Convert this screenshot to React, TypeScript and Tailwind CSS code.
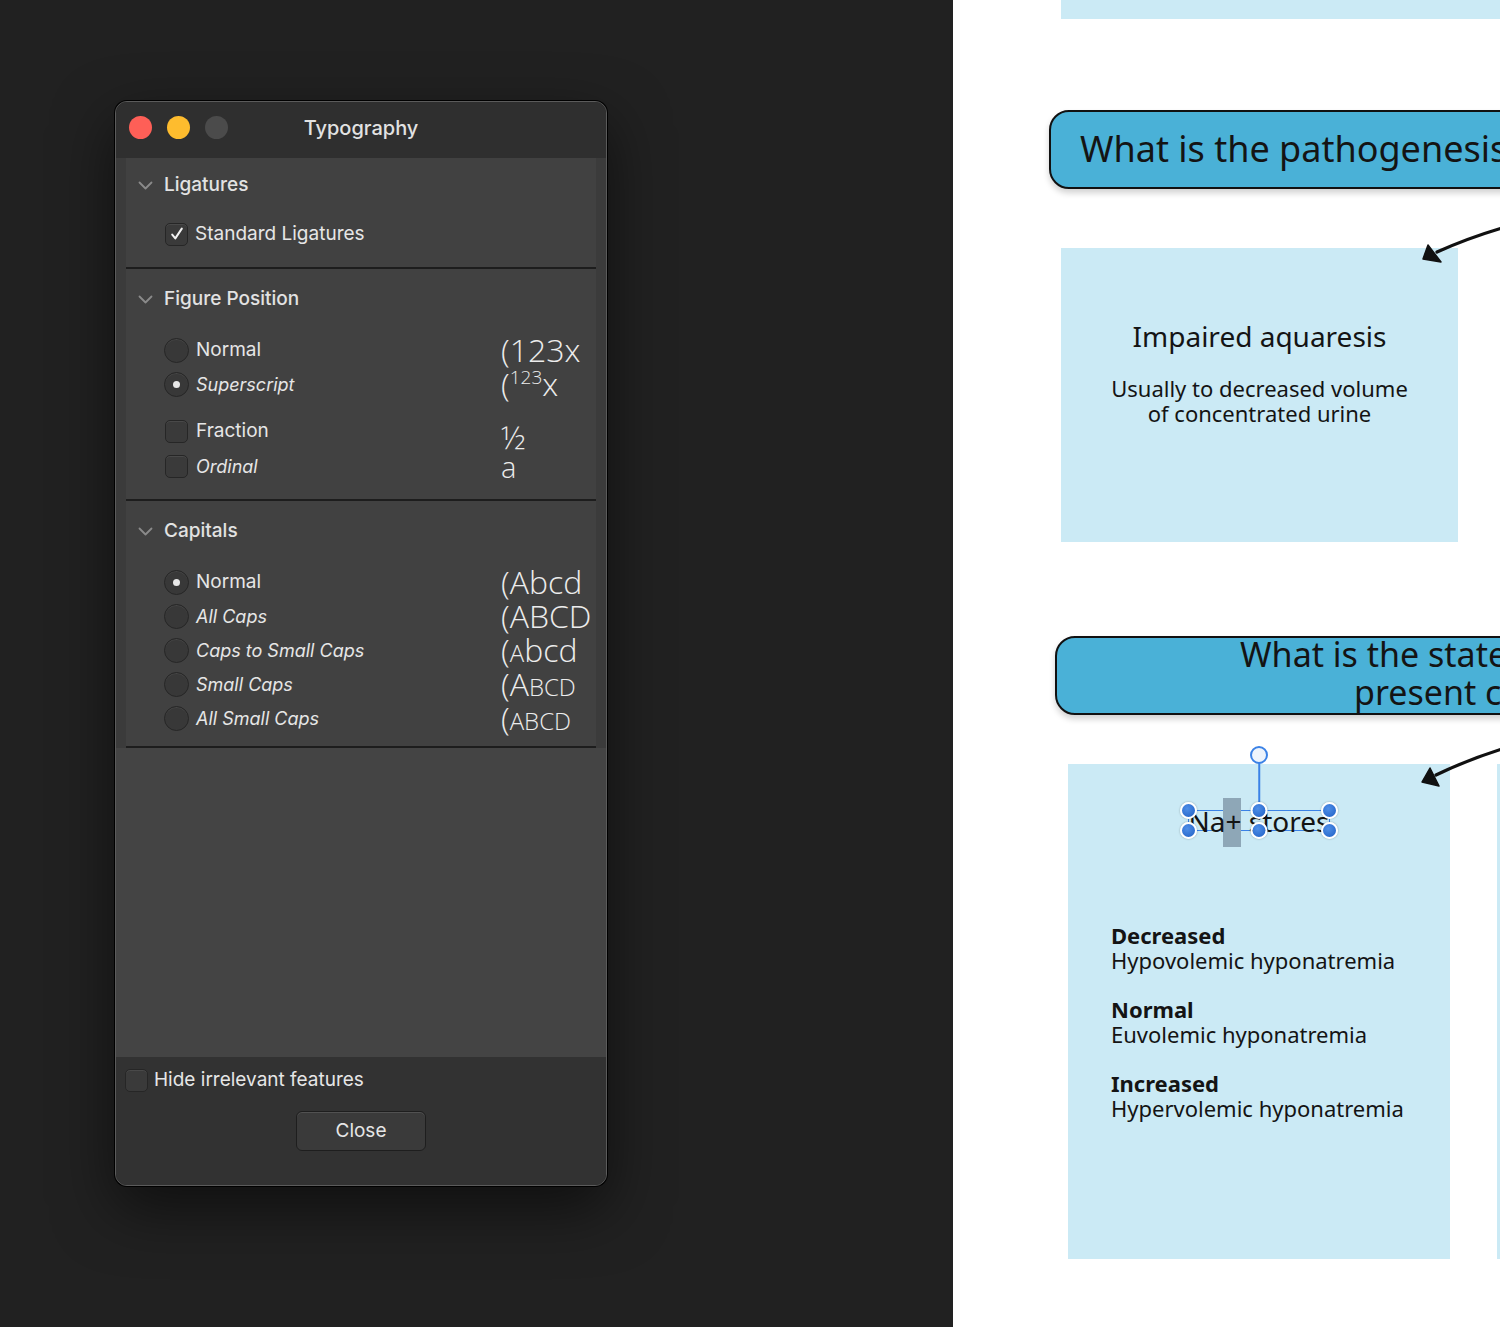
import { FC, ReactNode } from 'react';

const ui = "font-['Inter','Liberation_Sans',sans-serif]";
const canvasFont = "font-['Noto_Sans','Open_Sans',sans-serif]";
const previewFont = "font-['Open_Sans','Noto_Sans',sans-serif] font-light text-[#ececec]";

const Chevron: FC = () => (
  <svg width="15" height="9" viewBox="0 0 15 9" className="block">
    <path d="M1.5 1.5l6 6 6-6" stroke="#8a8a8a" strokeWidth="1.8" fill="none" strokeLinecap="round" strokeLinejoin="round" />
  </svg>
);

const Checkbox: FC<{ checked?: boolean }> = ({ checked }) => (
  <div className="w-[23px] h-[23px] rounded-[5px] bg-[#3a3a3a] border border-[#262626] shadow-[inset_0_1px_0_rgba(255,255,255,0.08)] flex items-center justify-center">
    {checked && (
      <svg width="16" height="16" viewBox="0 0 16 16">
        <path d="M3.2 8.6l3.1 3.8L12.8 2.6" stroke="#f2f2f2" strokeWidth="2" fill="none" strokeLinecap="round" strokeLinejoin="round" />
      </svg>
    )}
  </div>
);

const Radio: FC<{ checked?: boolean }> = ({ checked }) => (
  <div className="w-[25px] h-[25px] rounded-full bg-[#383838] border border-[#262626] shadow-[inset_0_1px_0_rgba(255,255,255,0.07)] flex items-center justify-center">
    {checked && <div className="w-[7px] h-[7px] rounded-full bg-[#e8e8e8]" />}
  </div>
);

const Row: FC<{ control: ReactNode; label: string; italic?: boolean; preview?: ReactNode; className?: string }> = ({
  control,
  label,
  italic,
  preview,
  className = '',
}) => (
  <div className={`flex items-center h-[34px] pl-[38px] ${className}`}>
    <div className="w-[25px] flex justify-center">{control}</div>
    <div className={`ml-[7px] w-[305px] text-[#e6e6e6] ${italic ? 'italic text-[18px]' : 'text-[19px]'}`}>{label}</div>
    <div className={`${previewFont} text-[32px] leading-none whitespace-nowrap`}>{preview}</div>
  </div>
);

const SectionHeader: FC<{ title: string; h: string }> = ({ title, h }) => (
  <div className={`flex items-center pl-[12px] ${h}`}>
    <Chevron />
    <span className="ml-[11px] text-[19px] font-medium text-[#e2e2e2]">{title}</span>
  </div>
);

const Divider: FC = () => <div className="h-[2px] mx-[10px] bg-[#1d1d1d]" />;

const TypographyDialog: FC = () => (
  <div
    className={`${ui} w-[492px] h-[1085px] rounded-[12px] border border-[#5b5b5b] shadow-[0_0_0_1px_#000,0_22px_60px_rgba(0,0,0,0.55)] overflow-hidden flex flex-col`}
  >
    {/* title bar */}
    <div className="h-[56px] pb-[5px] bg-[#2f2f2f] grid grid-cols-[1fr_auto_1fr] items-center">
      <div className="flex items-center gap-[15px] pl-[13px]">
        <div className="w-[23px] h-[23px] rounded-full bg-[#fe5f57]" />
        <div className="w-[23px] h-[23px] rounded-full bg-[#febc2e]" />
        <div className="w-[23px] h-[23px] rounded-full bg-[#4b4b4b]" />
      </div>
      <div className="text-[20px] font-medium text-[#e2e2e2]">Typography</div>
      <div />
    </div>

    {/* settings body */}
    <div className="flex-1 bg-[#3b3b3b] flex flex-col">
      <div className="mx-[10px] bg-[#414141] flex flex-col">
        <SectionHeader title="Ligatures" h="h-[54px]" />
        <div className="flex items-center h-[44px] pl-[39px]">
          <Checkbox checked />
          <span className="ml-[7px] text-[19px] text-[#e6e6e6]">Standard Ligatures</span>
        </div>
        <div className="h-[11px]" />
      </div>
      <Divider />

      <div className="mx-[10px] bg-[#414141] flex flex-col pb-[16px]">
        <SectionHeader title="Figure Position" h="h-[60px]" />
        <Row className="mt-[4px]" control={<Radio />} label="Normal" preview={<span>(123x</span>} />
        <Row
          control={<Radio checked />}
          label="Superscript"
          italic
          preview={
            <span>
              (<span className="text-[19px] relative -top-[12px]">123</span>x
            </span>
          }
        />
        <Row className="mt-[13px]" control={<Checkbox />} label="Fraction" preview={<span className="relative top-[6px]">½</span>} />
        <Row className="mt-px" control={<Checkbox />} label="Ordinal" italic preview={<span className="text-[29px]">a</span>} />
      </div>
      <Divider />

      <div className="mx-[10px] bg-[#414141] flex flex-col pb-[11px]">
        <SectionHeader title="Capitals" h="h-[60px]" />
        <Row className="mt-[4px]" control={<Radio checked />} label="Normal" preview={<span>(Abcd</span>} />
        <Row control={<Radio />} label="All Caps" italic preview={<span>(ABCD</span>} />
        <Row
          control={<Radio />}
          label="Caps to Small Caps"
          italic
          preview={
            <span>
              (<span className="text-[24px]">A</span>bcd
            </span>
          }
        />
        <Row
          control={<Radio />}
          label="Small Caps"
          italic
          preview={
            <span>
              (A<span className="text-[24px]">BCD</span>
            </span>
          }
        />
        <Row
          control={<Radio />}
          label="All Small Caps"
          italic
          preview={
            <span>
              (<span className="text-[24px]">ABCD</span>
            </span>
          }
        />
      </div>
      <Divider />
      <div className="flex-1 bg-[#444444]" />
    </div>

    {/* footer */}
    <div className="h-[128px] bg-[#323232] flex flex-col">
      <div className="flex items-center h-[47px] pl-[9px]">
        <Checkbox />
        <span className="ml-[6px] text-[19px] text-[#e6e6e6]">Hide irrelevant features</span>
      </div>
      <div className="flex justify-center mt-[7px]">
        <button className="w-[130px] h-[40px] rounded-[6px] bg-[#3a3a3a] border border-[#1e1e1e] shadow-[inset_0_1px_0_rgba(255,255,255,0.12)] text-[19px] text-[#e6e6e6]">
          Close
        </button>
      </div>
    </div>
  </div>
);

const Handle: FC<{ className: string }> = ({ className }) => (
  <div
    className={`absolute w-[17px] h-[17px] rounded-full border-2 border-white bg-[radial-gradient(circle_at_40%_35%,#4f8fe8,#1f5fc4)] shadow-[0_0_2px_rgba(0,0,0,0.35)] ${className}`}
  />
);

const Canvas: FC = () => (
  <div className={`${canvasFont} relative flex-1 h-full bg-white overflow-hidden text-[#141414]`}>
    {/* top card (cropped) */}
    <div className="absolute left-[108px] top-0 w-[460px] h-[19px] bg-[#cbeaf5]" />

    {/* question 1 */}
    <div className="absolute left-[96px] top-[110px] w-[700px] h-[79px] rounded-[20px] border-2 border-[#111] bg-[#4ab1d7] shadow-[0_4px_6px_rgba(0,0,0,0.18)] flex items-center pl-[29px] pb-[2px]">
      <span className="text-[36px] leading-none whitespace-nowrap">What is the pathogenesis of hyponatremia?</span>
    </div>

    {/* card: impaired aquaresis */}
    <div className="absolute left-[108px] top-[248px] w-[397px] h-[294px] bg-[#cbeaf5] flex flex-col items-center text-center">
      <div className="mt-[70px] text-[28px] leading-[36px]">Impaired aquaresis</div>
      <div className="mt-[22px] text-[22px] leading-[25px]">
        Usually to decreased volume
        <br />
        of concentrated urine
      </div>
    </div>

    {/* question 2 */}
    <div className="absolute left-[102px] top-[636px] w-[700px] h-[79px] rounded-[20px] border-2 border-[#111] bg-[#4ab1d7] shadow-[0_4px_6px_rgba(0,0,0,0.18)] flex flex-col justify-center pb-[6px] text-[34px] leading-[38px] whitespace-nowrap">
      <div className="pl-[183px]">What is the state of Na+ stores</div>
      <div className="pl-[297px]">present currently?</div>
    </div>

    {/* card: Na+ stores */}
    <div className="absolute left-[115px] top-[764px] w-[382px] h-[495px] bg-[#cbeaf5] flex flex-col">
      <div className="relative mx-auto mt-[46px] w-[142px] h-[21px] border-[1.5px] border-[#3b82e6]">
        <div className="absolute left-[34px] -top-[13px] w-[18px] h-[49px] bg-[#8ea7b7]" />
        <div className="absolute inset-0 flex items-center justify-center">
          <span className="text-[28px] leading-none whitespace-nowrap">Na+ stores</span>
        </div>
        <div className="absolute left-1/2 -top-[49px] w-[1.5px] h-[49px] -translate-x-1/2 bg-[#3b82e6]" />
        <div className="absolute left-1/2 -top-[65px] w-[18px] h-[18px] -translate-x-1/2 rounded-full border-2 border-[#3b82e6] bg-[#eef4fc]" />
        <Handle className="-left-[9px] -top-[9px]" />
        <Handle className="left-1/2 -translate-x-1/2 -top-[9px]" />
        <Handle className="-right-[9px] -top-[9px]" />
        <Handle className="-left-[9px] -bottom-[9px]" />
        <Handle className="left-1/2 -translate-x-1/2 -bottom-[9px]" />
        <Handle className="-right-[9px] -bottom-[9px]" />
      </div>
      <div className="mt-[92px] pl-[43px] text-[22px] leading-[25px] flex flex-col gap-[24px]">
        <div>
          <div className="font-bold">Decreased</div>
          <div>Hypovolemic hyponatremia</div>
        </div>
        <div>
          <div className="font-bold">Normal</div>
          <div>Euvolemic hyponatremia</div>
        </div>
        <div>
          <div className="font-bold">Increased</div>
          <div>Hypervolemic hyponatremia</div>
        </div>
      </div>
    </div>

    {/* neighbouring card (cropped) */}
    <div className="absolute left-[544px] top-[764px] w-[40px] h-[495px] bg-[#cbeaf5]" />

    {/* connector arrows */}
    <svg className="absolute inset-0 pointer-events-none" width="547" height="1327" viewBox="0 0 547 1327">
      <path d="M549 228 Q515 238 484 252" stroke="#111" strokeWidth="3.2" fill="none" strokeLinecap="round" />
      <polygon points="470,259 475,245 488,262" fill="#111" stroke="#111" strokeWidth="1.5" strokeLinejoin="round" />
      <path d="M549 749 Q514 760 483 775" stroke="#111" strokeWidth="3.2" fill="none" strokeLinecap="round" />
      <polygon points="469,782 477,768 486,786" fill="#111" stroke="#111" strokeWidth="1.5" strokeLinejoin="round" />
    </svg>
  </div>
);

const App: FC = () => (
  <div className="w-[1500px] h-[1327px] flex overflow-hidden">
    <div className="w-[953px] h-full bg-[#212121] pl-[115px] pt-[101px]">
      <TypographyDialog />
    </div>
    <Canvas />
  </div>
);

export default App;
